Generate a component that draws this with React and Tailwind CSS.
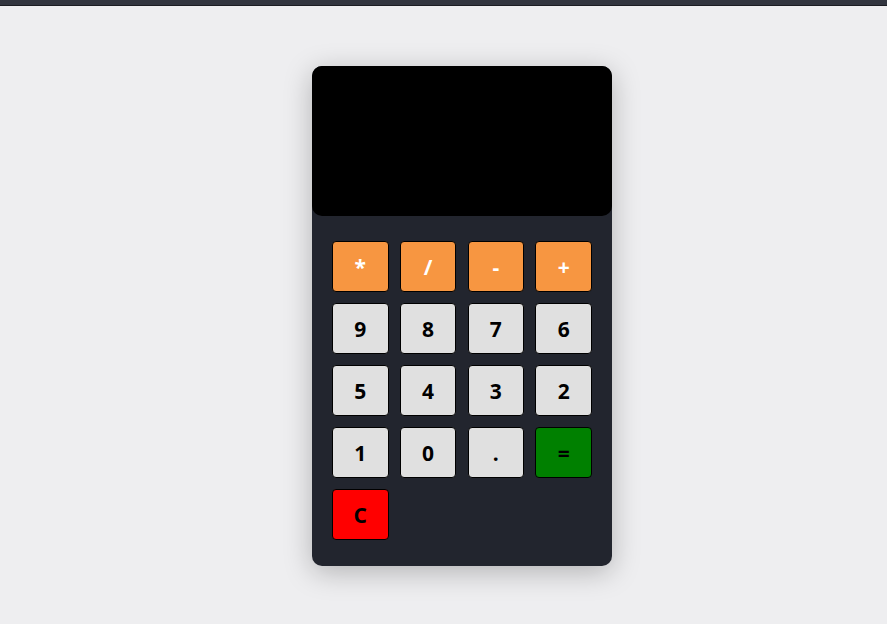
const keys = [
  { label: "*", kind: "op" },
  { label: "/", kind: "op" },
  { label: "-", kind: "op" },
  { label: "+", kind: "op" },
  { label: "9" },
  { label: "8" },
  { label: "7" },
  { label: "6" },
  { label: "5" },
  { label: "4" },
  { label: "3" },
  { label: "2" },
  { label: "1" },
  { label: "0" },
  { label: "." },
  { label: "=", kind: "eq" },
  { label: "C", kind: "clear" },
];

const kindClass = {
  op: "bg-[#f79641] text-white",
  eq: "bg-[#008000] text-black",
  clear: "bg-[#ff0000] text-black",
  num: "bg-[#e0e0e0] text-black",
};

export default function App() {
  return (
    <div
      className="min-h-screen bg-[#eeeef0]"
      style={{ fontFamily: '"Open Sans", "Noto Sans", sans-serif' }}
    >
      <div className="h-[6px] bg-[#32353f] border-b border-[#1b1c22]" />
      <div className="flex justify-center pl-[37px] pt-[60px]">
        <div className="w-[300px] h-[500px] rounded-[10px] bg-[#22252e] shadow-[0_6px_28px_rgba(0,0,0,0.25)]">
          <div className="h-[150px] rounded-[10px] bg-black" />
          <div className="grid grid-cols-[repeat(4,56.5px)] gap-x-[11.3px] gap-y-[11px] px-[20px] pt-[25px]">
            {keys.map((k) => (
              <button
                key={k.label}
                className={`h-[51px] rounded-[4px] border border-black pt-[2px] text-[21px] font-bold leading-none ${kindClass[k.kind || "num"]}`}
              >
                {k.label}
              </button>
            ))}
          </div>
        </div>
      </div>
    </div>
  );
}
